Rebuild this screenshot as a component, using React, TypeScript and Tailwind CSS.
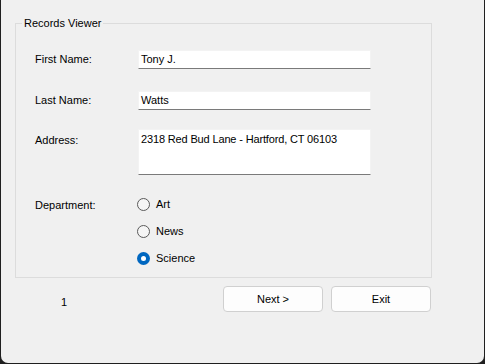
import { FC } from "react";

const Field: FC<{ label: string; value: string; tall?: boolean }> = ({ label, value, tall }) => {
  return (
    <div className={tall ? "flex items-start" : "flex items-center"}>
      <div className={tall ? "w-[103px] pt-[3px]" : "w-[103px]"}>{label}</div>
      <div
        className={
          tall
            ? "w-[233px] h-[46px] bg-white border-t border-x border-t-[#f3f3f3] border-x-[#f3f3f3] border-b border-b-[#7a7a7a] px-[2px] pt-[2px] leading-[14px] tracking-[-0.15px]"
            : "w-[233px] h-[19px] bg-white border-t border-x border-t-[#f3f3f3] border-x-[#f3f3f3] border-b border-b-[#7a7a7a] px-[2px] leading-[17px]"
        }
      >
        {value}
      </div>
    </div>
  );
};

const Radio: FC<{ label: string; checked?: boolean }> = ({ label, checked }) => {
  return (
    <div className="flex items-center h-[27px]">
      {checked ? (
        <span className="w-[13px] h-[13px] rounded-full bg-[#0067c0] flex items-center justify-center">
          <span className="w-[5px] h-[5px] rounded-full bg-white" />
        </span>
      ) : (
        <span className="w-[13px] h-[13px] rounded-full border border-[#5a5a5a] bg-[#f5f5f5]" />
      )}
      <span className="ml-[6px]">{label}</span>
    </div>
  );
};

const App: FC = () => {
  return (
    <div
      className="w-[485px] h-[364px] bg-[#1f1f1f] flex flex-col text-[11px] text-black"
      style={{ fontFamily: '"Liberation Sans", Arial, sans-serif' }}
    >
      <div className="flex-1 mx-px mb-px bg-[#f0f0f0] rounded-b-[7px] pl-[14px]">
        <fieldset className="mt-[16px] w-[417px] h-[262px] border border-[#dcdcdc] p-0">
          <legend className="ml-[6px] px-[2px] leading-[14px]">Records Viewer</legend>
          <div className="ml-[19px] mt-[20px] flex flex-col">
            <Field label="First Name:" value="Tony J." />
            <div className="mt-[22px]">
              <Field label="Last Name:" value="Watts" />
            </div>
            <div className="mt-[19px]">
              <Field label="Address:" value="2318 Red Bud Lane - Hartford, CT 06103" tall />
            </div>
            <div className="mt-[16px] flex items-start">
              <div className="w-[102px] pt-[6px]">Department:</div>
              <div className="flex flex-col">
                <Radio label="Art" />
                <Radio label="News" />
                <Radio label="Science" checked />
              </div>
            </div>
          </div>
        </fieldset>
        <div className="w-[416px] mt-[8px] flex items-start justify-between">
          <span className="ml-[46px] mt-[9px] leading-[14px]">1</span>
          <div className="flex gap-[8px]">
            <button className="w-[100px] h-[26px] rounded-[4px] border border-[#d0d0d0] bg-[#fdfdfd]">
              Next &gt;
            </button>
            <button className="w-[100px] h-[26px] rounded-[4px] border border-[#d0d0d0] bg-[#fdfdfd]">
              Exit
            </button>
          </div>
        </div>
      </div>
    </div>
  );
};

export default App;
